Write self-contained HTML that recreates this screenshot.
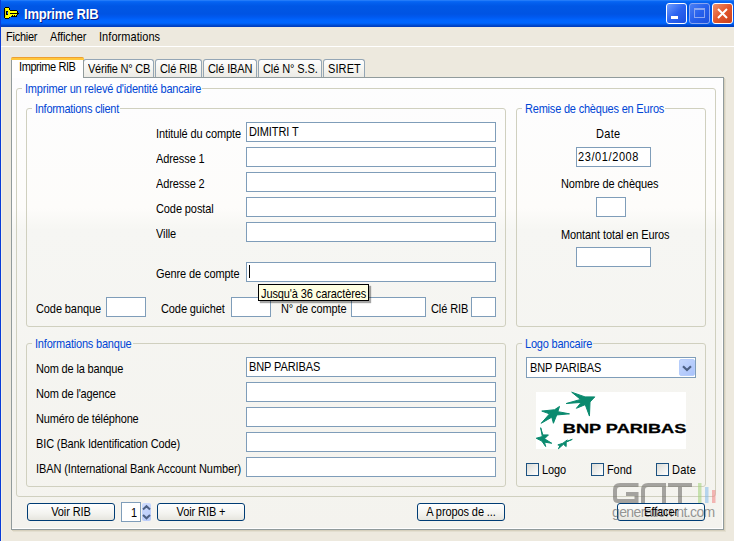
<!DOCTYPE html>
<html><head><meta charset="utf-8">
<style>
*{box-sizing:border-box}
html,body{margin:0;padding:0}
body{width:734px;height:541px;overflow:hidden;position:relative;background:#ede9de;font-family:"Liberation Sans",sans-serif;font-size:11px;color:#000}
.a{position:absolute}
.t{position:absolute;white-space:nowrap;line-height:13px;font-size:11px;letter-spacing:-0.1px;transform:scaleY(1.12);transform-origin:0 2px}
#title{left:0;top:0;width:734px;height:27px;background:linear-gradient(to bottom,#3a8cfc 0px,#0a6af6 1px,#035fee 3px,#0057e5 6px,#0054e3 14px,#0059f0 17px,#0064fd 20px,#0066ff 23px,#0050d8 25px,#003fc0 26px)}
#ttxt{left:24px;top:7px;color:#fff;font-weight:bold;font-size:13px;line-height:15px;transform:scaleY(1.1);transform-origin:0 12px;text-shadow:1px 1px 0 #0a1e8a;letter-spacing:-0.2px}
.wb{position:absolute;top:3px;width:21px;height:21px;border:1px solid #fff;border-radius:3px}
#menu{left:1px;top:27px;width:733px;height:19px;background:#ede9de}
#mline{left:1px;top:46px;width:733px;height:1px;background:#fff}
.tab{position:absolute;top:59px;height:18px;border:1px solid #94a6b5;border-bottom:none;border-radius:3px 3px 0 0;background:linear-gradient(#fefefe,#f4f3ee 60%,#ecebe6)}
#panel{left:11px;top:77px;width:713px;height:453px;border:1px solid #919b9c;background:linear-gradient(to bottom,#fdfdfe 0px,#fdfcfa 130px,#f6f6f3 152px,#f4f3ee 452px);box-shadow:inset -1px -1px 0 #fff,1px 1px 0 #d6d0bd,2px 2px 0 #e3dfd0}
.gb{position:absolute;border:1px solid #d0d0bf;border-radius:3px}
.gt{position:absolute;white-space:nowrap;line-height:13px;font-size:11px;color:#0046d5;transform:scaleY(1.12);transform-origin:0 2px;padding:0 1px 0 3px;letter-spacing:-0.2px;background:#fdfdfe}
.in{position:absolute;height:20px;border:1px solid #7f9db9;background:#fff}
.btn{position:absolute;height:18px;border:1px solid #003c74;border-radius:3px;background:linear-gradient(#fff,#f3f3ef 60%,#e6e5de);text-align:center;line-height:15px;font-size:11px;white-space:nowrap}
.bt{display:inline-block;transform:scaleY(1.12);transform-origin:0 2px;letter-spacing:-0.1px}
.cb{position:absolute;width:13px;height:13px;border:1px solid #1c5180;background:linear-gradient(135deg,#dcdcd7,#fff)}
</style></head><body>

<!-- title bar -->
<div class="a" style="left:0;top:0;width:1px;height:541px;background:#0a3cd8;z-index:10"></div>
<div class="a" style="left:1px;top:27px;width:1px;height:514px;background:#f6f2e4"></div>
<div id="title" class="a"></div>
<svg class="a" style="left:0;top:0" width="24" height="24" viewBox="0 0 24 24" shape-rendering="crispEdges">
 <path fill="#000" d="M5 7H9V8H10V10H17V11H18V13H19V14H18V15H17V17H10V18H9V19H5V18H4V8H5Z"/>
 <path fill="#ffff00" d="M5 8H9V10H10V11H17V13H10V14H17V15H16V16H15V15H14V16H13V15H12V16H11V17H9V18H5Z"/>
 <path fill="#d8d800" d="M5 9H6V17H5Z"/>
 <path fill="#000" d="M6 11H8V15H6Z"/>
 <path fill="#1f5fe0" d="M7 12H8V14H7Z"/>
</svg>
<div id="ttxt" class="a">Imprime RIB</div>
<div class="wb" style="left:666px;background:linear-gradient(135deg,#6f9dff,#2b63f0 50%,#1c4fe0)"><div class="a" style="left:4px;top:12px;width:7px;height:3px;background:#fff"></div></div>
<div class="wb" style="left:689px;border-color:#8aa6f0;background:linear-gradient(135deg,#4a7ff5,#2660ec 50%,#1c50de)"><div class="a" style="left:4px;top:4px;width:11px;height:10px;border:1px solid #8aa6f0;border-top-width:2px"></div></div>
<div class="wb" style="left:712px;background:linear-gradient(135deg,#f0926e,#e2562b 50%,#c9401c)">
  <svg class="a" style="left:3px;top:3px" width="13" height="13" viewBox="0 0 13 13"><path d="M2 2 L11 11 M11 2 L2 11" stroke="#fff" stroke-width="2"/></svg>
</div>

<!-- menu -->
<div id="menu" class="a"></div>
<div id="mline" class="a"></div>
<div class="t" style="left:6px;top:30px;letter-spacing:-0.25px">Fichier</div>
<div class="t" style="left:50px;top:30px">Afficher</div>
<div class="t" style="left:99px;top:30px;letter-spacing:0.05px">Informations</div>

<!-- panel -->
<div id="panel" class="a"></div>

<!-- tabs -->
<div class="tab" style="left:83px;width:71px"></div>
<div class="t" style="left:88px;top:62px;letter-spacing:-0.22px">Vérifie N° CB</div>
<div class="tab" style="left:155px;width:47px"></div>
<div class="t" style="left:160px;top:62px">Clé RIB</div>
<div class="tab" style="left:203px;width:54px"></div>
<div class="t" style="left:208px;top:62px">Clé IBAN</div>
<div class="tab" style="left:258px;width:64px"></div>
<div class="t" style="left:263px;top:62px">Clé N° S.S.</div>
<div class="tab" style="left:323px;width:42px"></div>
<div class="t" style="left:328px;top:62px;letter-spacing:0.1px">SIRET</div>
<!-- selected tab -->
<div class="a" style="left:11px;top:57px;width:73px;height:21px;border:1px solid #919b9c;border-top:none;border-bottom:none;background:#fff;border-radius:3px 3px 0 0"></div>
<div class="a" style="left:11px;top:57px;width:73px;height:3px;background:linear-gradient(#e68b2c,#ffc73c 50%,#ffc73c);border-radius:2px 2px 0 0"></div>
<div class="t" style="left:19px;top:60px;letter-spacing:-0.42px">Imprime RIB</div>


<!-- outer groupbox -->
<div class="gb" style="left:16px;top:88px;width:700px;height:409px"></div>
<div class="gt" style="left:22px;top:82px">Imprimer un relevé d'identité bancaire</div>

<!-- Informations client -->
<div class="gb" style="left:26px;top:108px;width:480px;height:219px"></div>
<div class="gt" style="left:32px;top:102px;letter-spacing:-0.28px">Informations client</div>
<div class="t" style="left:156px;top:127px">Intitulé du compte</div>
<div class="in" style="left:246px;top:122px;width:250px"></div>
<div class="t" style="left:249px;top:125px">DIMITRI T</div>
<div class="t" style="left:156px;top:152px">Adresse 1</div>
<div class="in" style="left:246px;top:147px;width:250px"></div>
<div class="t" style="left:156px;top:177px">Adresse 2</div>
<div class="in" style="left:246px;top:172px;width:250px"></div>
<div class="t" style="left:156px;top:202px">Code postal</div>
<div class="in" style="left:246px;top:197px;width:250px"></div>
<div class="t" style="left:156px;top:227px">Ville</div>
<div class="in" style="left:246px;top:222px;width:250px"></div>
<div class="t" style="left:156px;top:267px">Genre de compte</div>
<div class="in" style="left:246px;top:262px;width:250px"></div>
<div class="a" style="left:249px;top:265px;width:1px;height:13px;background:#000"></div>
<div class="t" style="left:36px;top:302px">Code banque</div>
<div class="in" style="left:106px;top:297px;width:40px"></div>
<div class="t" style="left:161px;top:302px">Code guichet</div>
<div class="in" style="left:231px;top:297px;width:40px"></div>
<div class="t" style="left:281px;top:302px">N° de compte</div>
<div class="in" style="left:351px;top:297px;width:75px"></div>
<div class="t" style="left:431px;top:302px">Clé RIB</div>
<div class="in" style="left:471px;top:297px;width:25px"></div>

<!-- Remise -->
<div class="gb" style="left:516px;top:108px;width:190px;height:219px"></div>
<div class="gt" style="left:522px;top:102px">Remise de chèques en Euros</div>
<div class="t" style="left:596px;top:127px;letter-spacing:0.3px">Date</div>
<div class="in" style="left:576px;top:147px;width:75px"></div>
<div class="t" style="left:578px;top:150px;letter-spacing:0.6px">23/01/2008</div>
<div class="t" style="left:561px;top:177px">Nombre de chèques</div>
<div class="in" style="left:596px;top:197px;width:30px"></div>
<div class="t" style="left:561px;top:228px">Montant total en Euros</div>
<div class="in" style="left:576px;top:247px;width:75px"></div>

<!-- Informations banque -->
<div class="gb" style="left:26px;top:343px;width:480px;height:144px"></div>
<div class="gt" style="left:32px;top:337px;background:#f5f5f1">Informations banque</div>
<div class="t" style="left:36px;top:362px;letter-spacing:-0.17px">Nom de la banque</div>
<div class="in" style="left:246px;top:357px;width:250px"></div>
<div class="t" style="left:249px;top:360px">BNP PARIBAS</div>
<div class="t" style="left:36px;top:387px;letter-spacing:-0.17px">Nom de l'agence</div>
<div class="in" style="left:246px;top:382px;width:250px"></div>
<div class="t" style="left:36px;top:412px;letter-spacing:-0.17px">Numéro de téléphone</div>
<div class="in" style="left:246px;top:407px;width:250px"></div>
<div class="t" style="left:36px;top:437px;letter-spacing:-0.13px">BIC (Bank Identification Code)</div>
<div class="in" style="left:246px;top:432px;width:250px"></div>
<div class="t" style="left:36px;top:462px;letter-spacing:-0.1px">IBAN (International Bank Account Number)</div>
<div class="in" style="left:246px;top:457px;width:250px"></div>

<!-- Logo bancaire -->
<div class="gb" style="left:516px;top:343px;width:190px;height:144px"></div>
<div class="gt" style="left:522px;top:337px;background:#f5f5f1">Logo bancaire</div>
<div class="in" style="left:526px;top:357px;width:170px;height:21px"></div>
<div class="t" style="left:530px;top:361px">BNP PARIBAS</div>
<div class="a" style="left:679px;top:359px;width:16px;height:17px;border:1px solid #b6cdfb;border-radius:2px;background:linear-gradient(135deg,#c6d8fd,#a9c2fb)">
 <svg class="a" style="left:2px;top:5px" width="10" height="7" viewBox="0 0 10 7"><path d="M1 1.2 L5 5 L9 1.2" fill="none" stroke="#4d6185" stroke-width="2.2"/></svg>
</div>
<div class="a" style="left:536px;top:392px;width:150px;height:57px;background:#fff"></div>
<svg class="a" style="left:534px;top:390px" width="70" height="60" viewBox="0 0 631 541">
 <g fill="#0a8a6e" stroke="#0a8a6e" stroke-width="9" stroke-linejoin="round">
  <path d="M340,20 L460,62 L548,62 L505,108 L500,235 L462,132 L382,165 L425,112 L290,122 L420,85 Z"/>
  <path d="M70,190 L185,178 L230,148 L215,195 L320,215 L205,225 L175,300 L160,245 L65,300 L140,215 Z"/>
  <path d="M60,340 L80,405 L130,405 L95,440 L160,480 L95,470 L105,510 L70,460 L20,435 L75,420 Z"/>
  <path d="M345,445 L290,470 L290,510 L265,490 L220,530 L235,500 L215,495 L260,480 L300,450 L290,465 Z"/>
 </g>
</svg>
<svg class="a" style="left:560px;top:418px" width="130" height="20" viewBox="0 0 130 20"><text x="2.8" y="15.2" font-family="Liberation Sans" font-weight="bold" font-size="12.8" fill="#000" stroke="#000" stroke-width="0.3" textLength="123.5" lengthAdjust="spacingAndGlyphs">BNP PARIBAS</text></svg>
<div class="cb" style="left:526px;top:463px"></div>
<div class="t" style="left:542px;top:463px">Logo</div>
<div class="cb" style="left:591px;top:463px"></div>
<div class="t" style="left:607px;top:463px">Fond</div>
<div class="cb" style="left:656px;top:463px"></div>
<div class="t" style="left:672px;top:463px;letter-spacing:0.2px">Date</div>

<!-- bottom buttons -->
<div class="btn" style="left:27px;top:503px;width:88px"><span class="bt">Voir RIB</span></div>
<div class="in" style="left:121px;top:502px;width:20px;height:20px"></div>
<div class="t" style="left:121px;width:16px;text-align:right;top:506px">1</div>
<div class="a" style="left:142px;top:503px;width:9px;height:18px;border-radius:2px;background:linear-gradient(135deg,#cfdcfd,#b7cafa)">
 <svg class="a" style="left:0;top:0" width="9" height="18" viewBox="0 0 9 18"><path d="M1 6.5 L4.5 3.2 L8 6.5 M1 12 L4.5 15.3 L8 12" fill="none" stroke="#4d6185" stroke-width="2"/></svg>
</div>
<div class="btn" style="left:157px;top:503px;width:88px"><span class="bt">Voir RIB +</span></div>
<div class="btn" style="left:417px;top:503px;width:88px"><span class="bt">A propos de ...</span></div>
<div class="btn" style="left:617px;top:503px;width:88px"></div>
<!-- watermark -->
<div class="a" style="left:612px;top:504px;font-size:14px;line-height:16px;color:rgba(100,100,100,0.68);white-space:nowrap;letter-spacing:-0.6px">generation-nt.com</div>
<div class="btn" style="left:617px;top:503px;width:88px;border-color:transparent;background:none"><span class="bt">Effacer</span></div>


<svg class="a" style="left:610px;top:480px;z-index:5" width="110" height="26" viewBox="0 0 110 26">
 <g fill="none" stroke="rgba(110,108,105,0.6)" stroke-width="4">
  <path d="M28.5 5 H10 Q5 5 5 10 V18 Q5 21 8 21 H26.5 V14 H16"/>
  <path d="M33 23 V10 Q33 5 38 5 H54 V23"/>
  <path d="M58 5 H82 M70 5 V23"/>
 </g>
 <rect x="88" y="3" width="3.5" height="20" fill="rgba(160,210,120,0.55)"/>
 <rect x="95" y="7" width="3.5" height="16" fill="rgba(130,185,235,0.55)"/>
 <rect x="102" y="10" width="3.5" height="13" fill="rgba(240,130,130,0.55)"/>
</svg>

<!-- tooltip -->
<div class="a" style="left:258px;top:284px;width:111px;height:17px;border:1px solid #000;background:#ffffe1;box-shadow:2px 2px 1px rgba(0,0,0,0.35)"></div>
<div class="t" style="left:261px;top:287px">Jusqu'à 36 caractères</div>

</body></html>
